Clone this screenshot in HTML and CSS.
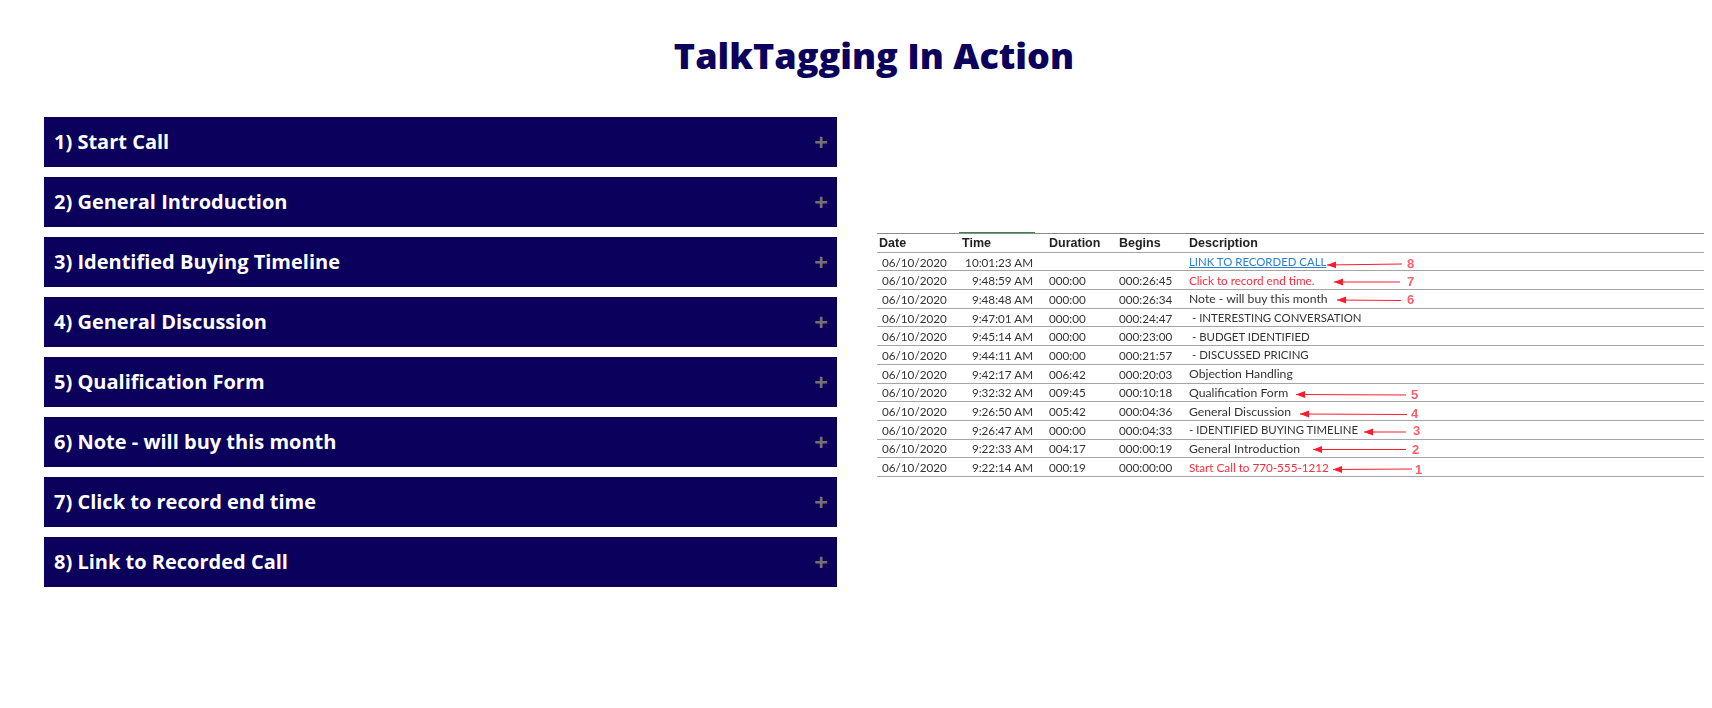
FILE: index.html
```html
<!DOCTYPE html>
<html lang="en">

<head>
    <meta charset="UTF-8">
    <meta name="viewport" content="width=device-width, initial-scale=1.0">
    <title>TalkTagging In Action</title>
    <link rel="stylesheet" href="styles.css">
</head>

<body>
    <div class="mainDiv">
        <h1 class="pageTitle">TalkTagging In Action</h1>
        <div class="columns">
            <div class="accordion">
                <div class="accordionBar"><span>1) Start Call</span><span class="plus">+</span></div>
                <div class="accordionBar"><span>2) General Introduction</span><span class="plus">+</span></div>
                <div class="accordionBar"><span>3) Identified Buying Timeline</span><span class="plus">+</span></div>
                <div class="accordionBar"><span>4) General Discussion</span><span class="plus">+</span></div>
                <div class="accordionBar"><span>5) Qualification Form</span><span class="plus">+</span></div>
                <div class="accordionBar"><span>6) Note - will buy this month</span><span class="plus">+</span></div>
                <div class="accordionBar"><span>7) Click to record end time</span><span class="plus">+</span></div>
                <div class="accordionBar"><span>8) Link to Recorded Call</span><span class="plus">+</span></div>
            </div>

            <div class="callLog">
                <div class="logRow logHeader">
                    <span>Date</span><span class="timeHead">Time</span><span>Duration</span><span>Begins</span><span>Description</span>
                </div>
                <div class="logRow">
                    <span class="date">06/10/2020</span><span class="time">10:01:23 AM</span><span></span><span></span><span class="link caps">LINK TO RECORDED CALL</span>
                </div>
                <div class="logRow">
                    <span class="date">06/10/2020</span><span class="time">9:48:59 AM</span><span>000:00</span><span>000:26:45</span><span class="red">Click to record end time.</span>
                </div>
                <div class="logRow">
                    <span class="date">06/10/2020</span><span class="time">9:48:48 AM</span><span>000:00</span><span>000:26:34</span><span class="desc">Note - will buy this month</span>
                </div>
                <div class="logRow">
                    <span class="date">06/10/2020</span><span class="time">9:47:01 AM</span><span>000:00</span><span>000:24:47</span><span class="indent caps">- INTERESTING CONVERSATION</span>
                </div>
                <div class="logRow">
                    <span class="date">06/10/2020</span><span class="time">9:45:14 AM</span><span>000:00</span><span>000:23:00</span><span class="indent caps">- BUDGET IDENTIFIED</span>
                </div>
                <div class="logRow">
                    <span class="date">06/10/2020</span><span class="time">9:44:11 AM</span><span>000:00</span><span>000:21:57</span><span class="indent caps">- DISCUSSED PRICING</span>
                </div>
                <div class="logRow">
                    <span class="date">06/10/2020</span><span class="time">9:42:17 AM</span><span>006:42</span><span>000:20:03</span><span class="desc">Objection Handling</span>
                </div>
                <div class="logRow">
                    <span class="date">06/10/2020</span><span class="time">9:32:32 AM</span><span>009:45</span><span>000:10:18</span><span class="desc">Qualification Form</span>
                </div>
                <div class="logRow">
                    <span class="date">06/10/2020</span><span class="time">9:26:50 AM</span><span>005:42</span><span>000:04:36</span><span class="desc">General Discussion</span>
                </div>
                <div class="logRow">
                    <span class="date">06/10/2020</span><span class="time">9:26:47 AM</span><span>000:00</span><span>000:04:33</span><span class="caps">- IDENTIFIED BUYING TIMELINE</span>
                </div>
                <div class="logRow">
                    <span class="date">06/10/2020</span><span class="time">9:22:33 AM</span><span>004:17</span><span>000:00:19</span><span class="desc">General Introduction</span>
                </div>
                <div class="logRow">
                    <span class="date">06/10/2020</span><span class="time">9:22:14 AM</span><span>000:19</span><span>000:00:00</span><span class="red">Start Call to 770-555-1212</span>
                </div>

                <!-- hand drawn arrows on top of the log, coordinates are relative to the log box -->
                <svg class="arrows" width="827" height="245" viewBox="0 0 827 245">
                    <defs>
                        <marker id="head" markerWidth="10" markerHeight="8" refX="9" refY="4" orient="auto" markerUnits="userSpaceOnUse">
                            <path d="M0 0.5 L9 4 L0 7.5 Z" fill="#ff1a2e"></path>
                        </marker>
                    </defs>
                    <g class="arrowLines">
                        <line x1="525" y1="30" x2="450" y2="31" marker-end="url(#head)"></line>
                        <line x1="523" y1="48" x2="457" y2="48" marker-end="url(#head)"></line>
                        <line x1="524" y1="66.5" x2="460" y2="66" marker-end="url(#head)"></line>
                        <line x1="529" y1="161" x2="419" y2="160.5" marker-end="url(#head)"></line>
                        <line x1="530" y1="180.5" x2="423" y2="180" marker-end="url(#head)"></line>
                        <line x1="529" y1="198" x2="487" y2="198" marker-end="url(#head)"></line>
                        <line x1="529" y1="215.5" x2="436" y2="215.5" marker-end="url(#head)"></line>
                        <line x1="535" y1="235" x2="456" y2="235.5" marker-end="url(#head)"></line>
                    </g>
                    <g class="arrowNums">
                        <text x="530" y="33.5">8</text>
                        <text x="530" y="51.5">7</text>
                        <text x="530" y="70">6</text>
                        <text x="534" y="164.5">5</text>
                        <text x="534" y="184">4</text>
                        <text x="536" y="201">3</text>
                        <text x="535" y="219.5">2</text>
                        <text x="538" y="239.5">1</text>
                    </g>
                </svg>
            </div>
        </div>
    </div>
</body>

</html>
```

FILE: styles.css
```css
body {
    font-family: "Open Sans", sans-serif;
    padding: 0;
    margin: 0;
    background-color: white;
}

.mainDiv {
    padding: 0 8px 0 44px;
}

.pageTitle {
    margin: 0;
    padding-top: 31px;
    height: 117px;
    box-sizing: border-box;
    text-align: center;
    font-size: 36px;
    line-height: 49px;
    font-weight: 800;
    color: #0b005c;
}

.columns {
    display: flex;
    gap: 40px;
}

.accordion {
    width: 793px;
    flex-shrink: 0;
}

.accordionBar {
    display: flex;
    align-items: center;
    justify-content: space-between;
    height: 50px;
    margin-bottom: 10px;
    padding: 0 9px 2px 10px;
    box-sizing: border-box;
    background-color: #0b005c;
    color: white;
    font-size: 20px;
    font-weight: 700;
}

.plus {
    color: #717171;
    font-size: 24px;
}

.callLog {
    position: relative;
    flex-grow: 1;
    height: 245px;
    margin-top: 116px;
    border-top: 1px solid #8a8a8a;
    font-family: "Lato", sans-serif;
    font-size: 11.7px;
    color: #333;
    filter: blur(0.3px);
}

.logRow {
    display: grid;
    grid-template-columns: 83px 87px 70px 70px 1fr;
    align-items: center;
    height: 18.7px;
    box-sizing: border-box;
    padding-left: 2px;
    border-bottom: 1px solid #a5a5a5;
}

.logHeader {
    font-family: "Liberation Sans", sans-serif;
    font-size: 12.5px;
    font-weight: 700;
    color: #222;
}

.timeHead {
    position: relative;
}

.timeHead::before {
    content: "";
    position: absolute;
    top: -4px;
    left: -3px;
    width: 76px;
    height: 1px;
    background-color: #2e8b4a;
}

.date {
    padding-left: 3px;
}

.time {
    width: 71px;
    text-align: right;
}

.desc {
    font-size: 12.2px;
}

.caps {
    font-size: 11.4px;
}

.link {
    color: #2a7fd0;
    text-decoration: underline;
}

.red {
    color: #ff2a3c;
}

.indent {
    padding-left: 3px;
}

.arrows {
    position: absolute;
    top: 0;
    left: 0;
}

.arrowLines line {
    stroke: #ff1a2e;
    stroke-width: 1;
}

.arrowNums text {
    font-family: "Liberation Sans", sans-serif;
    font-size: 13px;
    font-weight: 700;
    fill: #f9606c;
}
```
